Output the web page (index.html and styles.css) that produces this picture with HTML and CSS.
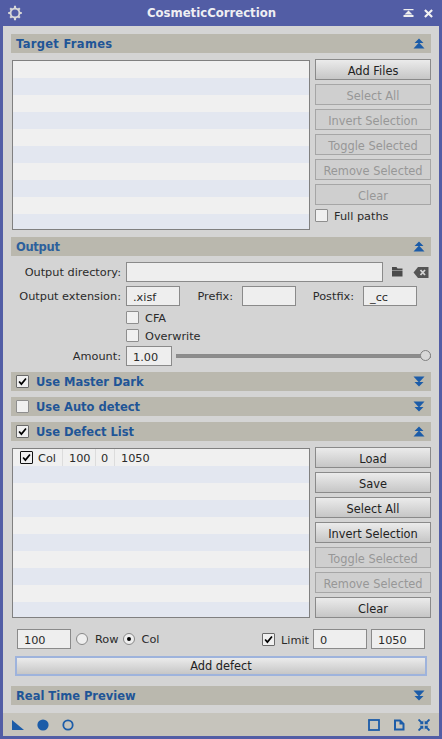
FILE: index.html
```
<!DOCTYPE html>
<html lang="en">
<head>
<meta charset="utf-8">
<title>CosmeticCorrection</title>
<link rel="stylesheet" href="styles.css">
</head>
<body>
<svg class="defs" width="0" height="0">
  <symbol id="up" viewBox="0 0 12 11"><path d="M6 .5 10.5 5H1.5Z M6 4.5 11.5 10.5H.5Z" fill="#1c5ca8"/></symbol>
  <symbol id="down" viewBox="0 0 12 11"><path d="M.5 .5H11.5L6 6.5Z M1.5 6H10.5L6 10.5Z" fill="#1c5ca8"/></symbol>
  <symbol id="tick" viewBox="0 0 13 13"><path d="M2.5 6.5 5.2 9.6 10.6 3" fill="none" stroke="#000" stroke-width="2"/></symbol>
</svg>
<div class="window">
  <header class="titlebar">
    <svg class="gear" viewBox="0 0 20 20"><circle cx="10" cy="10" r="5.6" fill="none" stroke="#d8d8d8" stroke-width="2.4"/><path d="M10 1V4M10 16V19M1.5 10H4.5M15.5 10H18.5M4 4 6 6M14 14 16 16M16 4 14 6M6 14 4 16" stroke="#d8d8d8" stroke-width="2.6"/></svg>
    <h1 class="title">CosmeticCorrection</h1>
    <svg class="tb-icon" viewBox="0 0 11 8"><path d="M.5 0H10.5V1.3H.5Z M5.5 1.6 9.5 5.4H1.5Z M.5 6H10.5V8H.5Z" fill="#eee"/></svg>
    <svg class="tb-icon close" viewBox="0 0 10 10"><path d="M1 1 9 9M9 1 1 9" stroke="#f2f2f2" stroke-width="2.4"/></svg>
  </header>
  <main class="content">
    <div class="bar"><span class="bar-title roomy">Target Frames</span><svg class="chev"><use href="#up"/></svg></div>
    <div class="list-row">
      <div class="list"><div class="row"></div><div class="row"></div><div class="row"></div><div class="row"></div><div class="row"></div><div class="row"></div><div class="row"></div><div class="row"></div><div class="row"></div><div class="row"></div></div>
      <div class="btns">
        <button class="btn">Add Files</button>
        <button class="btn off">Select All</button>
        <button class="btn off">Invert Selection</button>
        <button class="btn off">Toggle Selected</button>
        <button class="btn off">Remove Selected</button>
        <button class="btn off">Clear</button>
        <label class="check full"><span class="box"></span>Full paths</label>
      </div>
    </div>

    <div class="bar gap-top"><span class="bar-title faded">Output</span><svg class="chev"><use href="#up"/></svg></div>
    <div class="form">
      <div class="f-row first"><span class="lab">Output directory:</span><span class="inp dir"></span>
        <svg class="folder" viewBox="0 0 11 10"><path d="M0 0H4.5L5.5 1.5H10.5V3H0Z M0 3.6H10.5V9.5H0Z" fill="#4a4a4a"/></svg>
        <svg class="erase" viewBox="0 0 15 11"><path d="M4.5 0H15V11H4.5L0 5.5Z" fill="#555"/><path d="M7 3 11.5 8M11.5 3 7 8" stroke="#d4d4d4" stroke-width="1.8"/></svg>
      </div>
      <div class="f-row"><span class="lab">Output extension:</span><span class="inp ext">.xisf</span><span class="lab prefix">Prefix:</span><span class="inp ext"></span><span class="lab postfix">Postfix:</span><span class="inp ext">_cc</span></div>
      <label class="check indent cfa"><span class="box"></span>CFA</label>
      <label class="check indent over"><span class="box"></span>Overwrite</label>
      <div class="f-row amount"><span class="lab">Amount:</span><span class="inp amt">1.00</span><span class="slider"><span class="thumb"></span></span></div>
    </div>

    <div class="bar opt gap-a"><span class="box on"><svg><use href="#tick"/></svg></span><span class="bar-title">Use Master Dark</span><svg class="chev"><use href="#down"/></svg></div>
    <div class="bar opt gap-b"><span class="box"></span><span class="bar-title">Use Auto detect</span><svg class="chev"><use href="#down"/></svg></div>
    <div class="bar opt gap-b"><span class="box on"><svg><use href="#tick"/></svg></span><span class="bar-title">Use Defect List</span><svg class="chev"><use href="#up"/></svg></div>

    <div class="list-row">
      <div class="list">
        <div class="row cells"><span class="cell c1"><span class="box dark"><svg><use href="#tick"/></svg></span>Col</span><span class="cell c2">100</span><span class="cell c3">0</span><span class="cell c4">1050</span></div>
        <div class="row"></div><div class="row"></div><div class="row"></div><div class="row"></div><div class="row"></div><div class="row"></div><div class="row"></div><div class="row"></div><div class="row"></div>
      </div>
      <div class="btns">
        <button class="btn">Load</button>
        <button class="btn">Save</button>
        <button class="btn">Select All</button>
        <button class="btn">Invert Selection</button>
        <button class="btn off">Toggle Selected</button>
        <button class="btn off">Remove Selected</button>
        <button class="btn">Clear</button>
      </div>
    </div>

    <div class="defect-row">
      <span class="inp ext">100</span>
      <label class="radio"><span class="dot"></span>Row</label>
      <label class="radio"><span class="dot sel"></span>Col</label>
      <label class="check limit"><span class="box on"><svg><use href="#tick"/></svg></span>Limit</label>
      <span class="inp ext">0</span>
      <span class="inp ext">1050</span>
    </div>
    <button class="btn add">Add defect</button>

    <div class="bar preview"><span class="bar-title">Real Time Preview</span><svg class="chev"><use href="#down"/></svg></div>
  </main>
  <footer class="footer">
    <svg class="f-ico" viewBox="0 0 12 12"><path d="M0 1 12 11H0Z" fill="#1c5ca8"/></svg>
    <svg class="f-ico" viewBox="0 0 12 12"><circle cx="6" cy="6" r="5.6" fill="#1c5ca8"/></svg>
    <svg class="f-ico" viewBox="0 0 12 12"><circle cx="6" cy="6" r="4.7" fill="none" stroke="#1c5ca8" stroke-width="1.8"/></svg>
    <span class="spring"></span>
    <svg class="f-ico" viewBox="0 0 12 12"><rect x="1" y="1" width="10" height="10" fill="none" stroke="#1c5ca8" stroke-width="1.8"/></svg>
    <svg class="f-ico" viewBox="0 0 12 12"><path d="M1 .5H7.5L11.5 4.5V11.5H1Z M3 2.5V9.5H9.5V5.5H6.5V2.5Z" fill="#1c5ca8" fill-rule="evenodd"/></svg>
    <svg class="f-ico" viewBox="0 0 12 12"><path d="M.5 .5 4 4M11.5 .5 8 4M.5 11.5 4 8M11.5 11.5 8 8" stroke="#1c5ca8" stroke-width="1.9"/><path d="M1.5 5.3H5.3V1.5Z M10.5 5.3H6.7V1.5Z M1.5 6.7H5.3V10.5Z M10.5 6.7H6.7V10.5Z" fill="#1c5ca8"/></svg>
  </footer>
</div>
</body>
</html>
```
FILE: styles.css
```
* { box-sizing: border-box; }
html, body { margin: 0; padding: 0; }
body { width: 442px; height: 739px; overflow: hidden; background: #525da5; font-family: "DejaVu Sans", Verdana, sans-serif; font-size: 11.3px; color: #2a2a2a; }
.defs { position: absolute; }
.window { width: 442px; height: 739px; display: flex; flex-direction: column; background: #525da5; }

.titlebar { height: 26px; flex: none; display: flex; align-items: center; padding: 0 8px 0 7px; }
.gear { width: 16px; height: 16px; flex: none; }
.title { flex: 1; margin: 0; text-align: center; font-size: 11.7px; font-weight: bold; color: #eeeef2; padding-right: 3px; }
.tb-icon { width: 11px; height: 8px; flex: none; margin-right: 10px; }
.tb-icon.close { margin-right: 1px; width: 9px; height: 9px; }

.content { flex: 1; margin: 0 3px; padding: 8px 8px 0; background: #d4d4d4; }
.bar { height: 19px; display: flex; align-items: center; justify-content: space-between; background: #bab8ae; padding: 0 6px 0 5px; }
.bar-title { font-weight: bold; font-size: 11.5px; color: #1f5597; flex: 1; }
.bar-title.roomy { letter-spacing: .3px; }
.bar-title.faded { color: #2c609c; letter-spacing: -.3px; }
.chev { width: 12px; height: 11px; flex: none; }
.gap-top { margin-top: 7px; }
.gap-a { margin-top: 6px; }
.gap-b { margin-top: 6px; }
.preview { margin-top: 10px; }

.opt .box { margin-right: 7px; }

.list-row { display: flex; gap: 5px; margin-top: 6px; align-items: flex-start; }
.list { width: 298px; height: 170px; margin: 1px 0 0 1px; border: 1px solid #808080; background: #f0f0f0; overflow: hidden; }
.row { height: 17px; background: #f0f0f0; }
.row:nth-child(even) { background: #e3e7f0; }
.cells { display: flex; align-items: center; }
.cell { height: 17px; display: flex; align-items: center; border-right: 1px solid #dcdcdc; padding: 1px 0 0 5px; }
.c1 { width: 50px; padding-left: 7px; }
.c2 { width: 33px; padding-left: 6px; }
.c3 { width: 19px; }
.c4 { width: 50px; border-right: 0; padding-left: 6px; }
.c1 .box { margin: -1px 5px 0 0; }

.btns { width: 116px; display: flex; flex-direction: column; gap: 4px; }
.btn { height: 21px; padding: 2px 0 0; border: 1px solid #8a8a8a; background: linear-gradient(#ebebeb, #c6c6c6); font: 11.4px "DejaVu Sans", Verdana, sans-serif; color: #222; text-align: center; }
.btn.off { border-color: #a6a6a6; background: #cfcfcf; color: #979797; }

.box { width: 13px; height: 13px; flex: none; display: inline-block; border: 1px solid #8e8e8e; background: #f0f0f0; border-radius: 1px; }
.box svg { display: block; width: 11px; height: 11px; }
.box.on { border-color: #6a6a6a; }
.box.dark { border-color: #111; }
.check { display: flex; align-items: flex-start; gap: 6px; line-height: 15px; color: #2a2a2a; }
.full { height: 15px; }

.form { padding-top: 6px; }
.f-row { display: flex; align-items: center; height: 20px; margin-top: 4px; }
.f-row.first { margin-top: 0; }
.lab { width: 115px; height: 20px; line-height: 22px; text-align: right; padding-right: 5px; flex: none; white-space: nowrap; }
.inp { height: 20px; display: flex; align-items: center; flex: none; padding: 2px 0 0 6px; border: 1px solid #8a8a8a; background: #eeeeee; }
.dir { width: 257px; }
.ext { width: 54px; }
.amt { width: 46px; }
.lab.prefix { width: 62px; padding-right: 9px; }
.lab.postfix { width: 67px; padding-right: 9px; }
.folder { width: 11px; height: 10px; margin-left: 9px; flex: none; }
.erase { width: 16px; height: 11px; margin-left: 10px; flex: none; }
.indent { margin-left: 115px; height: 13px; }
.cfa { margin-top: 5px; }
.over { margin-top: 5px; }
.f-row.amount { margin-top: 4px; }
.slider { position: relative; width: 255px; height: 4px; margin-left: 4px; background: #8c8c8c; border: 1px solid #8a8a8a; flex: none; }
.thumb { position: absolute; right: -1px; top: -5px; width: 11px; height: 11px; border-radius: 50%; border: 1px solid #808080; background: #d8d8d8; }

.defect-row { display: flex; align-items: center; margin: 11px 0 0 6px; width: 408px; }
.radio { display: flex; align-items: flex-start; gap: 7px; line-height: 14px; margin: 2px -1px 0 5px; }
.dot { width: 12px; height: 12px; border-radius: 50%; border: 1px solid #888; background: #eeeeee; position: relative; flex: none; }
.dot.sel::after { content: ""; position: absolute; left: 3px; top: 3px; width: 4px; height: 4px; border-radius: 50%; background: #000; }
.limit { margin-left: auto; margin-right: 4px; height: 13px; }
.defect-row .inp + .inp { margin-left: 4px; }
.add { display: block; width: 412px; height: 20px; margin: 7px 0 0 4px; border: 2px solid #9eb3dc; padding-top: 0; }

.footer { height: 23px; flex: none; margin: 0 3px 3px; background: #c6c4bc; display: flex; align-items: center; gap: 13px; padding: 0 9px; }
.f-ico { width: 12px; height: 12px; flex: none; }
.spring { flex: 1; }
```
